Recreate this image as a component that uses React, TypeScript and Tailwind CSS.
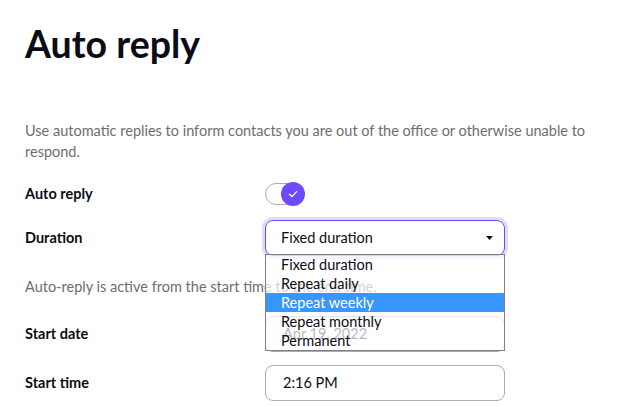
import React from 'react';

const options = ['Fixed duration', 'Repeat daily', 'Repeat weekly', 'Repeat monthly', 'Permanent'];

const Row = ({ label, children, className = '' }: { label: string; children: React.ReactNode; className?: string }) => (
  <div className={`flex items-center ${className}`}>
    <div className="w-[240px] shrink-0 text-[14.5px] font-bold text-[#0c0c14]">{label}</div>
    <div className="w-[240px]">{children}</div>
  </div>
);

const Toggle = () => (
  <div className="relative h-[24px] w-[40px]">
    <div className="absolute left-0 top-[1px] h-[22px] w-[36px] rounded-full border border-[#adadad] bg-white" />
    <div className="absolute left-[16px] top-0 flex h-[24px] w-[24px] items-center justify-center rounded-full bg-[#6d4aff]">
      <svg width="12" height="12" viewBox="0 0 12 12" fill="none">
        <path d="M2.5 6.2 L5 8.6 L9.6 3.6" stroke="white" strokeWidth="1.3" strokeLinecap="round" strokeLinejoin="round" />
      </svg>
    </div>
  </div>
);

export default function App() {
  return (
    <div className="min-h-screen bg-white px-[25px] pt-[20px] text-[#0c0c14]" style={{ fontFamily: 'Lato, "Noto Sans", sans-serif' }}>
      <h1 className="text-[37.5px] font-bold leading-[48px]">Auto reply</h1>
      <p className="mt-[52px] text-[14.5px] leading-[21px] text-[#706d6b]">
        Use automatic replies to inform contacts you are out of the office or otherwise unable to respond.
      </p>

      <Row label="Auto reply" className="mt-[20px] h-[24px]">
        <Toggle />
      </Row>

      <Row label="Duration" className="mt-[14px] h-[36px]">
        <div className="relative">
          <div className="flex h-[36px] items-center justify-between rounded-lg border border-[#6d4aff] pl-[15px] pr-[11px] shadow-[0_0_0_3px_#e2dbff]">
            <span className="text-[14.5px]">Fixed duration</span>
            <svg width="7" height="4" viewBox="0 0 7 4">
              <path d="M0 0 H7 L3.5 4 Z" fill="#0c0c14" />
            </svg>
          </div>
          <ul className="absolute left-0 top-[34px] z-10 w-[240px] border border-[#7f7f7f] bg-white/70">
            {options.map((o) => (
              <li
                key={o}
                className={`h-[19px] px-[15px] text-[14.5px] leading-[19px] ${o === 'Repeat weekly' ? 'bg-[#3a96ff] text-white' : 'text-[#0c0c14]'}`}
              >
                {o}
              </li>
            ))}
          </ul>
        </div>
      </Row>

      <p className="mt-[20px] text-[14.5px] leading-[21px] text-[#706d6b]">
        Auto-reply is active from the start time to the end time.
      </p>

      <Row label="Start date" className="mt-[19px] h-[36px]">
        <div className="flex h-[36px] items-center rounded-lg border border-[#adadad] px-[17px] text-[14.5px]">
          Apr 19, 2022
        </div>
      </Row>

      <Row label="Start time" className="mt-[13px] h-[36px]">
        <div className="flex h-[36px] items-center rounded-lg border border-[#adadad] px-[17px] text-[14.5px]">
          2:16 PM
        </div>
      </Row>
    </div>
  );
}
